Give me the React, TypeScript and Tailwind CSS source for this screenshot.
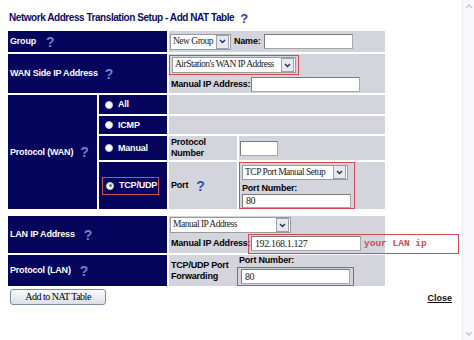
import React from "react";

const NAVY = "bg-[#05055e]";
const GRAY = "bg-[#d4d4dc]";

function Help({ dark = false }: { dark?: boolean }) {
  return (
    <span
      className={
        "font-['Liberation_Sans',Arial,sans-serif] font-bold text-[14px] leading-none " +
        (dark ? "text-[#2f4fb0]" : "text-[#6f82c2]")
      }
    >
      ?
    </span>
  );
}

function Chevron() {
  return (
    <span className="flex h-[14px] w-[13px] shrink-0 items-center justify-center border border-[#9aa3b5] bg-[#e6e9f0]">
      <svg width="7" height="5" viewBox="0 0 7 5">
        <path d="M1 1 L3.5 3.5 L6 1" fill="none" stroke="#2a2a4a" strokeWidth="1.4" />
      </svg>
    </span>
  );
}

function Select({ w, text }: { w: string; text: string }) {
  return (
    <div
      className={
        "flex h-[16px] items-center justify-between overflow-hidden border border-[#9a9a9a] bg-white pl-[2px] pr-[1px] " + w
      }
    >
      <span className="whitespace-nowrap font-['Liberation_Serif','Times_New_Roman',serif] text-[9.5px] leading-none tracking-[-0.5px] text-[#222]">
        {text}
      </span>
      <Chevron />
    </div>
  );
}

function Input({ w, value = "" }: { w: string; value?: string }) {
  return (
    <div
      className={
        "flex h-[15px] items-center border border-[#a8a8a8] border-t-[#7a7a7a] border-l-[#7a7a7a] bg-white pl-[3px] " +
        w
      }
    >
      <span className="font-['Liberation_Serif','Times_New_Roman',serif] text-[10px] leading-none tracking-[-0.4px] text-[#222]">
        {value}
      </span>
    </div>
  );
}

function Radio({ on = false }: { on?: boolean }) {
  return (
    <span className="flex h-[8px] w-[8px] items-center justify-center rounded-full border border-[#c8c8d8] bg-white">
      {on && <span className="h-[3px] w-[3px] rounded-full bg-[#2c9a3a]" />}
    </span>
  );
}

const label = "font-['Liberation_Sans',Arial,sans-serif] font-bold text-[9px] leading-[11px] tracking-[-0.2px]";

export default function App() {
  return (
    <div className="flex h-[340px] w-[474px] overflow-hidden bg-white">
      <div className="relative flex-1 pl-[8px] pt-[12px]">
        <div className="mb-[7px] flex h-[12px] items-center gap-[6px] pl-[1px]">
          <span className="font-['Liberation_Sans',Arial,sans-serif] text-[10px] font-bold leading-none tracking-[-0.45px] text-[#0c0c5c]">
            Network Address Translation Setup - Add NAT Table
          </span>
          <span className="font-['Liberation_Sans',Arial,sans-serif] text-[13px] font-bold leading-none text-[#2c3ea8]">?</span>
        </div>

        <div className="grid w-[377px] grid-cols-[89px_68px_68px_146px] grid-rows-[21px_39px_19px_18px_24px_47px_3px_37px_31px] gap-[2px]">
          {/* Group */}
          <div className={"col-span-2 flex items-center gap-[10px] pl-[2px] text-white " + NAVY}>
            <span className={label}>Group</span>
            <Help />
          </div>
          <div className={"col-span-2 flex items-center pl-[1px] " + GRAY}>
            <Select w="w-[61px]" text="New Group" />
            <span className={label + " ml-[3px] mr-[3px] text-black"}>Name:</span>
            <Input w="w-[89px]" />
          </div>

          {/* WAN Side */}
          <div className={"col-span-2 flex items-center gap-[7px] pl-[2px] text-white " + NAVY}>
            <span className={label}>WAN Side IP Address</span>
            <Help />
          </div>
          <div className={"col-span-2 flex flex-col justify-between pb-[1px] pl-0 pt-[1px] " + GRAY}>
            <div className="w-[130px] border border-[#d24a55] p-[1px] pl-[2px]">
              <Select w="w-[124px]" text="AirStation's WAN IP Address" />
            </div>
            <div className="flex items-center pl-[2px]">
              <span className={label + " w-[80px] text-black"}>Manual IP Address:</span>
              <Input w="w-[109px]" />
            </div>
          </div>

          {/* Protocol WAN */}
          <div className={"row-span-4 flex items-center gap-[7px] pl-[2px] text-white " + NAVY}>
            <span className={label}>Protocol (WAN)</span>
            <Help />
          </div>
          <div className={"flex items-center gap-[5px] pl-[6px] text-white " + NAVY}>
            <Radio />
            <span className={label}>All</span>
          </div>
          <div className={"col-span-2 " + GRAY} />
          <div className={"flex items-center gap-[5px] pl-[6px] text-white " + NAVY}>
            <Radio />
            <span className={label}>ICMP</span>
          </div>
          <div className={"col-span-2 " + GRAY} />
          <div className={"flex items-center gap-[5px] pl-[6px] text-white " + NAVY}>
            <Radio />
            <span className={label}>Manual</span>
          </div>
          <div className={"flex items-center pl-[2px] " + GRAY}>
            <span className={label + " text-black"}>
              Protocol
              <br />
              Number
            </span>
          </div>
          <div className={"flex items-center pl-[1px] " + GRAY}>
            <Input w="w-[38px]" />
          </div>
          <div className={"flex items-center pl-[3px] text-white " + NAVY}>
            <div className="flex h-[18px] w-[57px] items-center gap-[5px] border border-[#d24a55] pl-[3px]">
              <Radio on />
              <span className={label}>TCP/UDP</span>
            </div>
          </div>
          <div className={"flex items-center gap-[8px] pl-[2px] " + GRAY}>
            <span className={label + " text-black"}>Port</span>
            <Help dark />
          </div>
          <div className={"flex items-stretch py-[0px] " + GRAY}>
            <div className="flex w-[116px] flex-col border border-[#d24a55] px-[2px] pt-[2px]">
              <Select w="w-[106px]" text="TCP Port Manual Setup" />
              <span className={label + " mt-[3px] text-black"}>Port Number:</span>
              <Input w="w-[109px]" value="80" />
            </div>
          </div>

          {/* spacer */}
          <div className="col-span-4" />

          {/* LAN IP */}
          <div className={"col-span-2 flex items-center gap-[9px] pl-[2px] text-white " + NAVY}>
            <span className={label}>LAN IP Address</span>
            <Help />
          </div>
          <div className={"relative col-span-2 flex flex-col justify-between pb-[2px] pl-[1px] pt-[1px] " + GRAY}>
            <Select w="w-[121px]" text="Manual IP Address" />
            <div className="flex items-center pl-[1px]">
              <span className={label + " w-[80px] text-black"}>Manual IP Address:</span>
              <Input w="w-[110px]" value="192.168.1.127" />
            </div>
            <div className="absolute left-[79px] top-[18px] flex h-[20px] w-[211px] items-center border border-[#d24a55]">
              <span className="ml-[115px] whitespace-nowrap font-['Liberation_Mono','Courier_New',monospace] text-[9.5px] font-bold leading-none text-[#d04a55]">
                your LAN ip
              </span>
            </div>
          </div>

          {/* Protocol LAN */}
          <div className={"col-span-2 flex items-center gap-[9px] pl-[2px] text-white " + NAVY}>
            <span className={label}>Protocol (LAN)</span>
            <Help />
          </div>
          <div className={"col-span-2 flex items-center pl-[2px] " + GRAY}>
            <span className={label + " w-[66px] text-black"}>
              TCP/UDP Port
              <br />
              Forwarding
            </span>
            <div className="flex flex-col">
              <span className={label + " mb-[1px] pl-[2px] text-black"}>Port Number:</span>
              <div className="w-[117px] border border-[#d24a55] px-[3px] py-[1px]">
                <Input w="w-[109px]" value="80" />
              </div>
            </div>
          </div>
        </div>

        <div className="mt-[3px] flex items-center justify-between pr-[10px]">
          <div className="ml-[2px] flex h-[16px] w-[96px] items-center justify-center rounded-[3px] border border-[#7c8aa8] bg-gradient-to-b from-[#fbfbfd] to-[#dcdfe8]">
            <span className="font-['Liberation_Serif','Times_New_Roman',serif] text-[10px] leading-none tracking-[-0.5px] text-black">
              Add to NAT Table
            </span>
          </div>
          <span className="mt-[2px] font-['Liberation_Sans',Arial,sans-serif] text-[9px] font-bold leading-none text-[#111] underline">
            Close
          </span>
        </div>
      </div>

      <div className="flex h-full w-[12px] flex-col items-center justify-between border-l border-[#ececf2] bg-[#f8f8fb] py-[3px]">
        <svg width="8" height="6" viewBox="0 0 8 6">
          <path d="M1 5 L4 2 L7 5" fill="none" stroke="#c4c4cc" strokeWidth="1.3" />
        </svg>
        <svg width="8" height="6" viewBox="0 0 8 6">
          <path d="M1 1 L4 4 L7 1" fill="none" stroke="#c4c4cc" strokeWidth="1.3" />
        </svg>
      </div>
    </div>
  );
}
